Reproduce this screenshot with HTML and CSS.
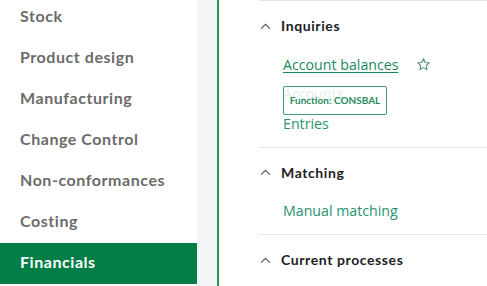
FILE: index.html
```html
<!DOCTYPE html>
<html>
<head>
<meta charset="utf-8">
<link rel="stylesheet" href="styles.css">
</head>
<body>
<div class="page">
  <nav class="sidebar">
    <ul class="menu">
      <li class="menu-item">Stock</li>
      <li class="menu-item">Product design</li>
      <li class="menu-item">Manufacturing</li>
      <li class="menu-item">Change Control</li>
      <li class="menu-item">Non-conformances</li>
      <li class="menu-item">Costing</li>
      <li class="menu-item active">Financials</li>
    </ul>
  </nav>
  <div class="strip"></div>
  <div class="divider"></div>
  <main class="main">
    <section class="section">
      <h2 class="heading"><svg class="chev" viewBox="0 0 12 8" width="11" height="7"><path d="M1 6.5 L6 1.5 L11 6.5" fill="none" stroke="#556" stroke-width="1.3"/></svg>Inquiries</h2>
      <ul class="links">
        <li class="link-row"><a class="link hover">Account balances</a><svg class="star" viewBox="0 0 24 24" width="15" height="15"><path d="M12 2.8l2.75 5.9 6.45.75-4.8 4.4 1.3 6.35L12 17l-5.7 3.2 1.3-6.35-4.8-4.4 6.45-.75z" fill="none" stroke="#4f8f7a" stroke-width="1.8" stroke-linejoin="round"/></svg></li>
        <li class="link-row tip-anchor"><a class="link">Accounts</a><span class="tooltip">Function: CONSBAL</span></li>
        <li class="link-row"><a class="link">Entries</a></li>
      </ul>
    </section>
    <section class="section">
      <h2 class="heading"><svg class="chev" viewBox="0 0 12 8" width="11" height="7"><path d="M1 6.5 L6 1.5 L11 6.5" fill="none" stroke="#556" stroke-width="1.3"/></svg>Matching</h2>
      <ul class="links">
        <li class="link-row"><a class="link">Manual matching</a></li>
      </ul>
    </section>
    <section class="section">
      <h2 class="heading"><svg class="chev" viewBox="0 0 12 8" width="11" height="7"><path d="M1 6.5 L6 1.5 L11 6.5" fill="none" stroke="#556" stroke-width="1.3"/></svg>Current processes</h2>
    </section>
  </main>
</div>
</body>
</html>
```
FILE: styles.css
```css
html, body {
  margin: 0;
  padding: 0;
  background: #fff;
  overflow: hidden;
}
body {
  font-family: "Open Sans", "Liberation Sans", sans-serif;
}
.page {
  display: flex;
  height: 286px;
  width: 487px;
  overflow: hidden;
}
.sidebar {
  width: 197px;
  flex: none;
  background: #fff;
}
.menu {
  list-style: none;
  margin: -3px 0 0 0;
  padding: 0;
}
.menu-item {
  height: 41px;
  line-height: 38px;
  padding-left: 20px;
  font-family: "Lato", "Liberation Sans", sans-serif;
  font-weight: 700;
  font-size: 16px;
  letter-spacing: 0.55px;
  color: #6b6b6b;
}
.menu-item.active {
  background: #007e45;
  color: #fff;
}
.strip {
  width: 20px;
  flex: none;
  background: #f2f4f5;
}
.divider {
  width: 2px;
  flex: none;
  background: #1b9a55;
}
.main {
  flex: 1;
  padding-left: 40px;
}
.section {
  border-top: 1px solid #e1e5e8;
  padding-bottom: 8px;
}
.heading {
  margin: 15px 0 0 0;
  height: 20px;
  line-height: 20px;
  font-family: "Lato", "Liberation Sans", sans-serif;
  font-size: 14px;
  letter-spacing: 0.6px;
  font-weight: 700;
  color: #1c1c24;
  display: flex;
  align-items: center;
}
.chev {
  margin: 0 10px 0 1px;
}
.links {
  list-style: none;
  margin: 14px 0 0 0;
  padding: 0 0 0 24px;
}
.link-row {
  height: 29.5px;
  line-height: 30px;
  display: flex;
  align-items: center;
  position: relative;
}
.link {
  font-size: 14.2px;
  color: #2a9270;
}
.link.hover {
  color: #1a8a5e;
  text-decoration: underline;
  text-underline-offset: 2px;
}
.star {
  margin-left: 17px;
}
.tooltip {
  position: absolute;
  left: 0;
  top: 6px;
  width: 102px;
  height: 27px;
  border: 1px solid #3d9a6e;
  border-radius: 2px;
  background: rgba(255, 255, 255, 0.85);
  font-family: "Lato", "Liberation Sans", sans-serif;
  font-size: 10px;
  font-weight: 700;
  color: #2a8a5e;
  line-height: 27px;
  text-align: center;
  box-sizing: content-box;
}
```
